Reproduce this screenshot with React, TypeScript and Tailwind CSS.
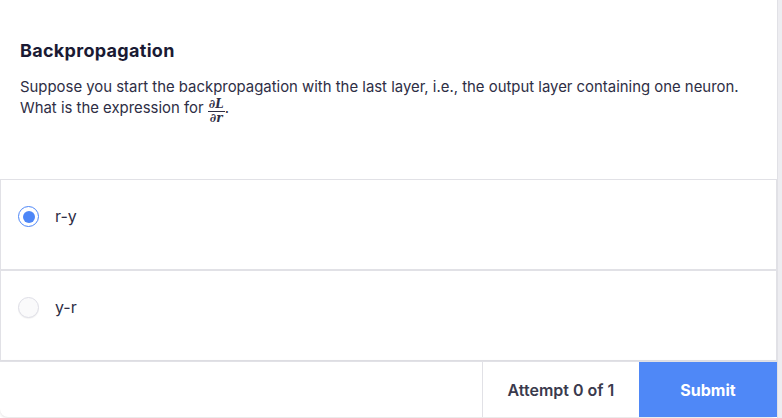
const options = [
  { id: "a", label: "r-y" },
  { id: "b", label: "y-r" },
];

export default function App() {
  const selected = "a";
  return (
    <div className="flex h-[418px] w-[782px] overflow-hidden bg-white" style={{ fontFamily: "Inter, 'Noto Sans', sans-serif" }}>
      <div className="flex w-[777px] flex-col">
        <div className="h-[179px] px-5 pt-[39px]">
          <h1 className="text-[18px] font-bold leading-6 tracking-[0.3px] text-[#1a1a33]">
            Backpropagation
          </h1>
          <p className="mt-[14px] text-[14.9px] leading-[21px] text-[#2e2e45]">
            Suppose you start the backpropagation with the last layer, i.e., the output layer containing one neuron.
            <br />
            What is the expression for{" "}
            <span className="-my-[8px] inline-flex translate-y-[3px] flex-col items-center align-middle text-[12px] font-bold italic leading-[13px]" style={{ fontFamily: "'DejaVu Serif', serif" }}>
              <span className="border-b border-[#2e2e45] px-[1px]">∂L</span>
              <span>∂r</span>
            </span>
            .
          </p>
        </div>
        {options.map((o) => (
          <label key={o.id} className="flex h-[91px] items-start gap-[16px] border border-[#e1e1e6] bg-white pl-[17px] pt-[26px]">
            {selected === o.id ? (
              <span className="flex h-[21px] w-[21px] items-center justify-center rounded-full border-[1.5px] border-[#4d86f7]">
                <span className="h-[12px] w-[12px] rounded-full bg-[#4d86f7]" />
              </span>
            ) : (
              <span className="h-[21px] w-[21px] rounded-full border border-[#dedee6] bg-[#fafafb] shadow-[0_1px_1px_rgba(0,0,0,0.05)]" />
            )}
            <span className="text-[16px] leading-[21px] text-[#2e2e45]">{o.label}</span>
          </label>
        ))}
        <div className="flex h-[56px] rounded-b-[8px] border-t border-[#e1e1e6] bg-white shadow-[0_1px_3px_rgba(0,0,0,0.12)]">
          <div className="flex-1" />
          <div className="flex w-[157px] items-center justify-center border-l border-[#e1e1e6] text-[16px] font-semibold text-[#3a3a4d]">
            Attempt 0 of 1
          </div>
          <button className="flex w-[138px] items-center justify-center bg-[#4f88f7] text-[16px] font-bold text-white">
            Submit
          </button>
        </div>
      </div>
      <div className="w-[5px] border-l border-[#e1e1e6] bg-[#ededf1]" />
    </div>
  );
}
